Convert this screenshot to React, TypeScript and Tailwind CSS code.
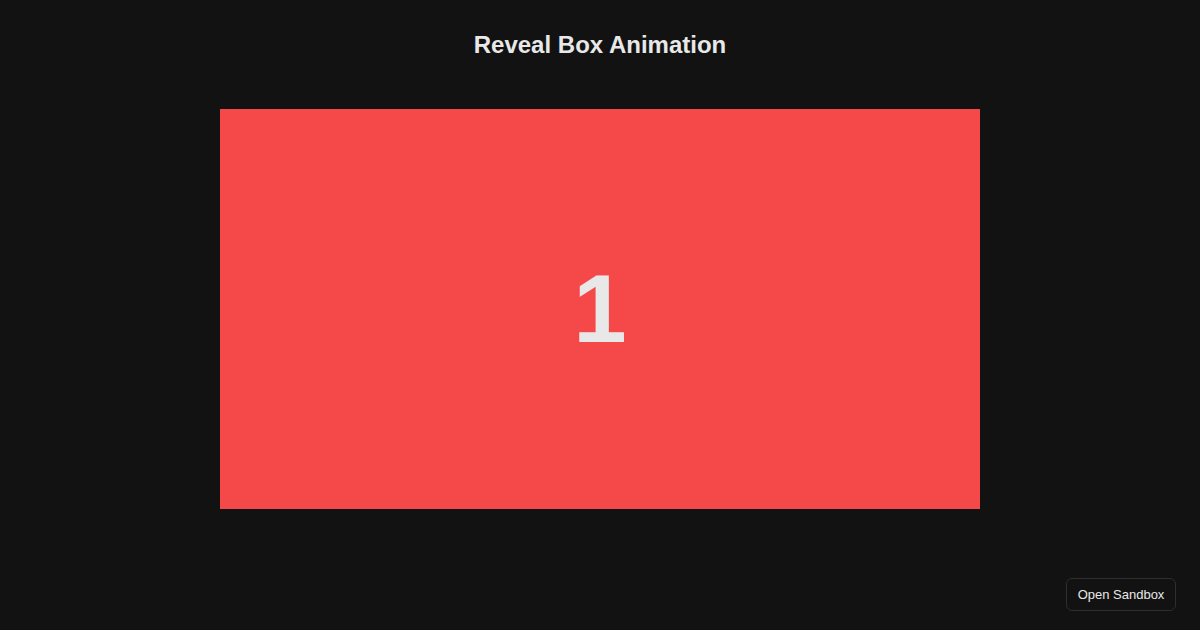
import React from 'react';

const App: React.FC = () => {
    return (
        <div className="relative w-[1200px] h-[630px] bg-[#121212] text-[#e8e8e8] font-['Liberation_Sans',Arial,sans-serif] flex flex-col items-center overflow-hidden">
            {/* Title */}
            <h1 className="mt-[29px] text-[24px] leading-[32px] font-bold">Reveal Box Animation</h1>

            {/* Reveal box */}
            <div className="mt-[48px] w-[760px] h-[400px] bg-[#f54849] flex items-center justify-center">
                <span className="text-[96px] leading-none font-bold text-[#e8e8e8]">1</span>
            </div>

            {/* Sandbox link */}
            <button className="absolute right-[24px] bottom-[19px] w-[110px] h-[33px] rounded-md border border-[#2e2e2e] bg-[#121212] text-[13px] text-[#e8e8e8] flex items-center justify-center">
                Open Sandbox
            </button>
        </div>
    );
};

export default App;
